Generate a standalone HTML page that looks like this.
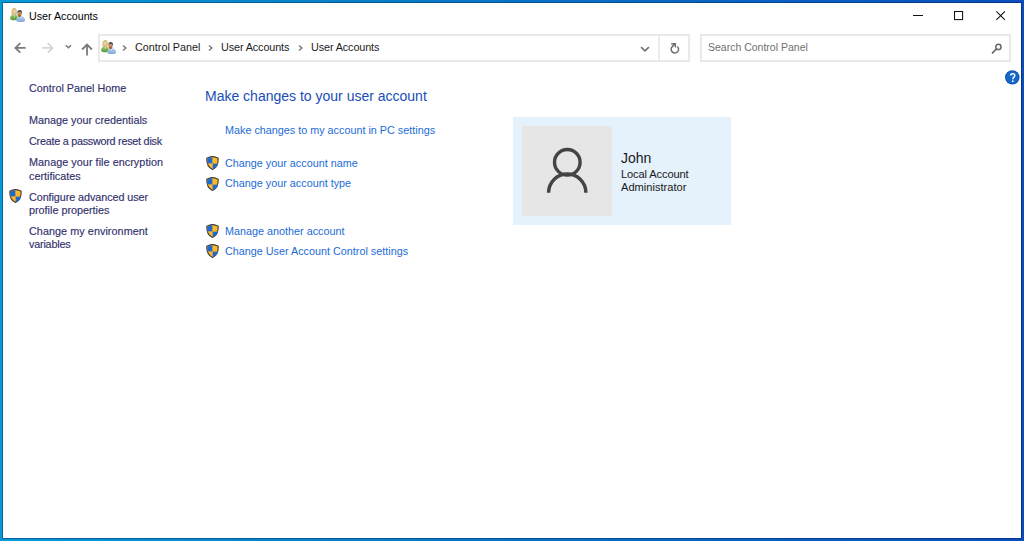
<!DOCTYPE html>
<html><head><meta charset="utf-8">
<style>
html,body{margin:0;padding:0;}
body{width:1024px;height:541px;overflow:hidden;position:relative;
 background:linear-gradient(90deg,#0898d8 0%,#0874c8 50%,#0a4ec0 100%);
 font-family:"Liberation Sans",sans-serif;}
#win{position:absolute;left:2px;top:2px;width:1018px;height:535px;background:#fff;background-clip:padding-box;border:1px solid rgba(0,0,0,0.32);}
.t{position:absolute;white-space:nowrap;line-height:1;}
.title{font-size:10.7px;color:#000;}
.addr{font-size:10.8px;color:#1b1b1b;}
.search{font-size:10.5px;color:#707070;}
.left{font-size:10.8px;color:#31316c;-webkit-text-stroke:0.15px #31316c;}
.head{font-size:14px;color:#1a4db8;}
.link{font-size:10.8px;color:#1c6cd6;}
.john{font-size:14px;color:#1a1a1a;}
.sub{font-size:11.1px;color:#1a1a1a;}
svg{position:absolute;overflow:visible;}
.box{position:absolute;box-sizing:border-box;}
</style></head><body>
<div id="win"></div>

<!-- title bar icon -->
<svg style="left:8px;top:6px" width="20" height="20" viewBox="0 0 20 20">
 <defs>
  <linearGradient id="tW" x1="0" y1="0" x2="0" y2="1"><stop offset="0" stop-color="#8fc563"/><stop offset="1" stop-color="#5a9a3c"/></linearGradient>
  <linearGradient id="tM" x1="0" y1="0" x2="0" y2="1"><stop offset="0" stop-color="#b8d4f0"/><stop offset="1" stop-color="#7ea8d6"/></linearGradient>
  <linearGradient id="tF" x1="0" y1="0" x2="0" y2="1"><stop offset="0" stop-color="#e2aa7a"/><stop offset="0.6" stop-color="#b87444"/><stop offset="1" stop-color="#7a4018"/></linearGradient>
  <linearGradient id="tG" x1="0" y1="0" x2="0" y2="1"><stop offset="0" stop-color="#f6dcc0"/><stop offset="1" stop-color="#d9a878"/></linearGradient>
 </defs>
 <path d="M2.2 12.2 C2.2 9.8 3.8 8.6 6 8.6 C8.3 8.6 9.8 9.8 9.8 12.2 C9.8 13.8 8.4 14.2 6 14.2 C3.6 14.2 2.2 13.8 2.2 12.2 Z" fill="url(#tW)"/>
 <path d="M5.5 9.2 L6.3 11.6 L7.1 9.2 Z" fill="#e6f2dc"/>
 <path d="M3.4 8.6 C3 4 4.2 1.9 6.2 1.9 C8.2 1.9 9.3 3.8 8.9 8.6 C8.2 8.9 7.5 9 6.2 9 C5 9 4.1 8.9 3.4 8.6 Z" fill="#d6c07a"/>
 <ellipse cx="6.4" cy="6.6" rx="1.75" ry="2.4" fill="url(#tG)"/>
 <path d="M8.4 14.2 C8.4 11.7 10.2 10.2 12.7 10.2 C15.2 10.2 17 11.7 17 14.2 C17 15.6 15.4 16.1 12.7 16.1 C10 16.1 8.4 15.6 8.4 14.2 Z" fill="url(#tM)"/>
 <path d="M11.6 10.4 L12.3 12.6 L13 10.4 Z" fill="#eef5fc"/>
 <ellipse cx="11.5" cy="8.3" rx="2" ry="2.75" fill="url(#tF)"/>
 <path d="M9.3 7.6 C9.1 5 10.3 4.1 11.7 4.1 C13.2 4.1 14.3 5 14.1 8.2 C13.8 7.4 13.4 6.9 13 6.5 C12.4 6 11.6 6 10.8 6.1 C10.1 6.3 9.6 6.8 9.3 7.6 Z" fill="#4c4c4c"/>
</svg>
<div class="t title" style="left:29px;top:10.8px">User Accounts</div>

<!-- window controls -->
<svg style="left:913px;top:15px" width="10" height="1"><rect x="0" y="0" width="10" height="1" fill="#111"/></svg>
<svg style="left:954px;top:11px" width="10" height="10"><rect x="0.5" y="0.5" width="8.1" height="8.1" fill="none" stroke="#111" stroke-width="1.05"/></svg>
<svg style="left:995.5px;top:10.8px" width="10" height="10"><path d="M0.4 0.4 L8.9 8.9 M8.9 0.4 L0.4 8.9" stroke="#111" stroke-width="1.05"/></svg>

<!-- nav -->
<svg style="left:14px;top:42px" width="12" height="12" viewBox="0 0 12 12"><path d="M11.6 5.9 H1.6 M6.3 1.1 L1.4 5.9 L6.3 10.7" fill="none" stroke="#7a7a7a" stroke-width="1.8"/></svg>
<svg style="left:41.5px;top:42px" width="12" height="12" viewBox="0 0 12 12"><path d="M0.4 5.9 H10.4 M5.7 1.1 L10.6 5.9 L5.7 10.7" fill="none" stroke="#d6d6d6" stroke-width="1.8"/></svg>
<svg style="left:65px;top:43.9px" width="7" height="5" viewBox="0 0 7 5"><path d="M0.8 1.3 L3.4 3.8 L6 1.3" fill="none" stroke="#777" stroke-width="1.5"/></svg>
<svg style="left:81px;top:42.6px" width="12" height="13" viewBox="0 0 12 13"><path d="M6 12.4 V2 M1.1 6.5 L6 1.6 L10.9 6.5" fill="none" stroke="#7a7a7a" stroke-width="1.8"/></svg>

<!-- address bar -->
<div class="box" style="left:98px;top:34px;width:592px;height:28px;border:2px solid #e9e9e9;"></div>
<div class="box" style="left:658px;top:35px;width:2px;height:26px;background:#ebebeb;"></div>
<svg style="left:99px;top:38px" width="20" height="20" viewBox="0 0 20 20">
 <defs>
  <linearGradient id="aW" x1="0" y1="0" x2="0" y2="1"><stop offset="0" stop-color="#8fc563"/><stop offset="1" stop-color="#5a9a3c"/></linearGradient>
  <linearGradient id="aM" x1="0" y1="0" x2="0" y2="1"><stop offset="0" stop-color="#b8d4f0"/><stop offset="1" stop-color="#7ea8d6"/></linearGradient>
  <linearGradient id="aF" x1="0" y1="0" x2="0" y2="1"><stop offset="0" stop-color="#e2aa7a"/><stop offset="0.6" stop-color="#b87444"/><stop offset="1" stop-color="#7a4018"/></linearGradient>
  <linearGradient id="aG" x1="0" y1="0" x2="0" y2="1"><stop offset="0" stop-color="#f6dcc0"/><stop offset="1" stop-color="#d9a878"/></linearGradient>
 </defs>
 <path d="M2.2 12.2 C2.2 9.8 3.8 8.6 6 8.6 C8.3 8.6 9.8 9.8 9.8 12.2 C9.8 13.8 8.4 14.2 6 14.2 C3.6 14.2 2.2 13.8 2.2 12.2 Z" fill="url(#aW)"/>
 <path d="M5.5 9.2 L6.3 11.6 L7.1 9.2 Z" fill="#e6f2dc"/>
 <path d="M3.4 8.6 C3 4 4.2 1.9 6.2 1.9 C8.2 1.9 9.3 3.8 8.9 8.6 C8.2 8.9 7.5 9 6.2 9 C5 9 4.1 8.9 3.4 8.6 Z" fill="#d6c07a"/>
 <ellipse cx="6.4" cy="6.6" rx="1.75" ry="2.4" fill="url(#aG)"/>
 <path d="M8.4 14.2 C8.4 11.7 10.2 10.2 12.7 10.2 C15.2 10.2 17 11.7 17 14.2 C17 15.6 15.4 16.1 12.7 16.1 C10 16.1 8.4 15.6 8.4 14.2 Z" fill="url(#aM)"/>
 <path d="M11.6 10.4 L12.3 12.6 L13 10.4 Z" fill="#eef5fc"/>
 <ellipse cx="11.5" cy="8.3" rx="2" ry="2.75" fill="url(#aF)"/>
 <path d="M9.3 7.6 C9.1 5 10.3 4.1 11.7 4.1 C13.2 4.1 14.3 5 14.1 8.2 C13.8 7.4 13.4 6.9 13 6.5 C12.4 6 11.6 6 10.8 6.1 C10.1 6.3 9.6 6.8 9.3 7.6 Z" fill="#4c4c4c"/>
</svg>
<svg style="left:122px;top:45.2px" width="5" height="6" viewBox="0 0 5 6"><path d="M1 0.6 L3.9 3 L1 5.4" fill="none" stroke="#767676" stroke-width="1.35"/></svg>
<div class="t addr" style="left:135px;top:42px">Control Panel</div>
<svg style="left:208px;top:45.2px" width="5" height="6" viewBox="0 0 5 6"><path d="M1 0.6 L3.9 3 L1 5.4" fill="none" stroke="#767676" stroke-width="1.35"/></svg>
<div class="t addr" style="left:221px;top:42px;letter-spacing:-0.1px">User Accounts</div>
<svg style="left:298px;top:45.2px" width="5" height="6" viewBox="0 0 5 6"><path d="M1 0.6 L3.9 3 L1 5.4" fill="none" stroke="#767676" stroke-width="1.35"/></svg>
<div class="t addr" style="left:311px;top:42px;letter-spacing:-0.1px">User Accounts</div>
<svg style="left:640px;top:46px" width="10" height="6" viewBox="0 0 10 6"><path d="M1.1 1.1 L5 4.9 L8.9 1.1" fill="none" stroke="#727272" stroke-width="1.6"/></svg>
<svg style="left:666px;top:40px" width="18" height="18" viewBox="0 0 18 18"><path d="M11.3 6.5 A3.7 3.7 0 1 1 6.3 6.6 L9 3.9" fill="none" stroke="#6e6e6e" stroke-width="1.55"/><path d="M5.2 3.7 H9.4 V7.6" fill="none" stroke="#6e6e6e" stroke-width="1.4"/></svg>

<!-- search -->
<div class="box" style="left:700px;top:34px;width:311px;height:28px;border:2px solid #e9e9e9;"></div>
<div class="t search" style="left:708px;top:42px">Search Control Panel</div>
<svg style="left:991px;top:43px" width="12" height="12" viewBox="0 0 12 12"><circle cx="7.4" cy="3.9" r="2.65" fill="none" stroke="#666" stroke-width="1.5"/><path d="M5.4 6 L1.5 9.9" stroke="#666" stroke-width="1.7" stroke-linecap="round"/></svg>

<!-- help -->
<svg style="left:1005px;top:69.5px" width="15" height="15" viewBox="0 0 15 15"><circle cx="7.3" cy="7.4" r="7.2" fill="#0b52ad"/><circle cx="7.3" cy="7.4" r="6.3" fill="#1767c9"/><path d="M5.6 5.5 C5.6 3.1 9.8 3.1 9.8 5.5 C9.8 7.1 7.8 7.2 7.8 9.3" fill="none" stroke="#fff" stroke-width="1.45"/><rect x="7" y="10.4" width="1.6" height="1.6" fill="#fff"/></svg>

<!-- left pane -->
<div class="t left" style="left:29px;top:82.6px">Control Panel Home</div>
<div class="t left" style="left:29px;top:115.3px">Manage your credentials</div>
<div class="t left" style="left:29px;top:135.8px;letter-spacing:-0.25px">Create a password reset disk</div>
<div class="t left" style="left:29px;top:156.8px;letter-spacing:0.05px">Manage your file encryption</div>
<div class="t left" style="left:29px;top:170.9px">certificates</div>
<div class="t left" style="left:29px;top:191.7px;letter-spacing:-0.07px">Configure advanced user</div>
<div class="t left" style="left:29px;top:204.6px">profile properties</div>
<div class="t left" style="left:29px;top:225.7px;letter-spacing:0.06px">Change my environment</div>
<div class="t left" style="left:29px;top:238.8px;letter-spacing:-0.2px">variables</div>

<!-- shields -->
<svg style="left:9px;top:189px" width="13" height="14" viewBox="0 0 13 14" id="sh0">
 <path d="M6.5 0.6 C4.7 0.6 2.6 1.5 0.8 2.2 C0.6 7.6 1.9 11.4 6.5 13.5 C11.1 11.4 12.4 7.6 12.2 2.2 C10.4 1.5 8.3 0.6 6.5 0.6 Z" fill="#fdb72b" stroke="#3c3c3c" stroke-width="1.1"/>
 <path d="M6.2 1.3 V7.2 H1.4 C1.3 5.4 1.3 3.9 1.4 2.7 C3 2.1 4.8 1.4 6.2 1.3 Z" fill="#1a6ad6"/>
 <path d="M6.8 7.7 H11.6 C11.3 10.1 10.1 11.7 6.8 12.7 Z" fill="#1a6ad6"/>
 <path d="M6.5 1 V13.1 M1.2 7.45 H11.8" stroke="#8a8a6a" stroke-width="0.5" opacity="0.6"/>
</svg>

<!-- main heading -->
<div class="t head" style="left:205px;top:88.9px">Make changes to your user account</div>
<div class="t link" style="left:225px;top:124.9px">Make changes to my account in PC settings</div>
<div class="t link" style="left:225px;top:157.6px">Change your account name</div>
<div class="t link" style="left:225px;top:178.3px">Change your account type</div>
<div class="t link" style="left:225px;top:225.7px">Manage another account</div>
<div class="t link" style="left:225px;top:245.9px">Change User Account Control settings</div>

<svg style="left:206px;top:156px" width="13" height="14" viewBox="0 0 13 14">
 <path d="M6.5 0.6 C4.7 0.6 2.6 1.5 0.8 2.2 C0.6 7.6 1.9 11.4 6.5 13.5 C11.1 11.4 12.4 7.6 12.2 2.2 C10.4 1.5 8.3 0.6 6.5 0.6 Z" fill="#fdb72b" stroke="#3c3c3c" stroke-width="1.1"/>
 <path d="M6.2 1.3 V7.2 H1.4 C1.3 5.4 1.3 3.9 1.4 2.7 C3 2.1 4.8 1.4 6.2 1.3 Z" fill="#1a6ad6"/>
 <path d="M6.8 7.7 H11.6 C11.3 10.1 10.1 11.7 6.8 12.7 Z" fill="#1a6ad6"/>
 <path d="M6.5 1 V13.1 M1.2 7.45 H11.8" stroke="#8a8a6a" stroke-width="0.5" opacity="0.6"/>
</svg>
<svg style="left:206px;top:177px" width="13" height="14" viewBox="0 0 13 14">
 <path d="M6.5 0.6 C4.7 0.6 2.6 1.5 0.8 2.2 C0.6 7.6 1.9 11.4 6.5 13.5 C11.1 11.4 12.4 7.6 12.2 2.2 C10.4 1.5 8.3 0.6 6.5 0.6 Z" fill="#fdb72b" stroke="#3c3c3c" stroke-width="1.1"/>
 <path d="M6.2 1.3 V7.2 H1.4 C1.3 5.4 1.3 3.9 1.4 2.7 C3 2.1 4.8 1.4 6.2 1.3 Z" fill="#1a6ad6"/>
 <path d="M6.8 7.7 H11.6 C11.3 10.1 10.1 11.7 6.8 12.7 Z" fill="#1a6ad6"/>
 <path d="M6.5 1 V13.1 M1.2 7.45 H11.8" stroke="#8a8a6a" stroke-width="0.5" opacity="0.6"/>
</svg>
<svg style="left:206px;top:223.5px" width="13" height="14" viewBox="0 0 13 14">
 <path d="M6.5 0.6 C4.7 0.6 2.6 1.5 0.8 2.2 C0.6 7.6 1.9 11.4 6.5 13.5 C11.1 11.4 12.4 7.6 12.2 2.2 C10.4 1.5 8.3 0.6 6.5 0.6 Z" fill="#fdb72b" stroke="#3c3c3c" stroke-width="1.1"/>
 <path d="M6.2 1.3 V7.2 H1.4 C1.3 5.4 1.3 3.9 1.4 2.7 C3 2.1 4.8 1.4 6.2 1.3 Z" fill="#1a6ad6"/>
 <path d="M6.8 7.7 H11.6 C11.3 10.1 10.1 11.7 6.8 12.7 Z" fill="#1a6ad6"/>
 <path d="M6.5 1 V13.1 M1.2 7.45 H11.8" stroke="#8a8a6a" stroke-width="0.5" opacity="0.6"/>
</svg>
<svg style="left:206px;top:244px" width="13" height="14" viewBox="0 0 13 14">
 <path d="M6.5 0.6 C4.7 0.6 2.6 1.5 0.8 2.2 C0.6 7.6 1.9 11.4 6.5 13.5 C11.1 11.4 12.4 7.6 12.2 2.2 C10.4 1.5 8.3 0.6 6.5 0.6 Z" fill="#fdb72b" stroke="#3c3c3c" stroke-width="1.1"/>
 <path d="M6.2 1.3 V7.2 H1.4 C1.3 5.4 1.3 3.9 1.4 2.7 C3 2.1 4.8 1.4 6.2 1.3 Z" fill="#1a6ad6"/>
 <path d="M6.8 7.7 H11.6 C11.3 10.1 10.1 11.7 6.8 12.7 Z" fill="#1a6ad6"/>
 <path d="M6.5 1 V13.1 M1.2 7.45 H11.8" stroke="#8a8a6a" stroke-width="0.5" opacity="0.6"/>
</svg>

<!-- user card -->
<div class="box" style="left:513px;top:117px;width:218px;height:108px;background:#e5f1fb;"></div>
<div class="box" style="left:522px;top:126px;width:90px;height:90px;background:#e6e6e6;"></div>
<svg style="left:522px;top:126px" width="90" height="90" viewBox="0 0 90 90">
 <circle cx="45.3" cy="36.3" r="12.8" fill="none" stroke="#444" stroke-width="3.4"/>
 <path d="M26.6 66.7 A18.6 18.6 0 0 1 63.9 66.7" fill="none" stroke="#444" stroke-width="3.4"/>
</svg>
<div class="t john" style="left:621px;top:151px">John</div>
<div class="t sub" style="left:621px;top:168.8px;letter-spacing:-0.12px">Local Account</div>
<div class="t sub" style="left:621px;top:181.6px">Administrator</div>

</body></html>
